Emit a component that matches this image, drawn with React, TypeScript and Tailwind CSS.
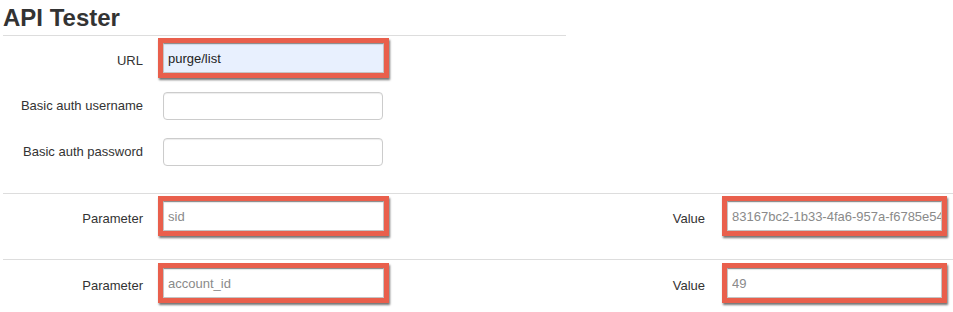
import React from "react";

function Label({ children, className = "" }: { children: React.ReactNode; className?: string }) {
  return (
    <div className={"text-right text-[13px] leading-[16px] text-[#333] " + className}>{children}</div>
  );
}

function RedInput({
  placeholder,
  value,
  widthClass,
  marginClass,
  blue,
}: {
  placeholder?: string;
  value?: string;
  widthClass: string;
  marginClass: string;
  blue?: boolean;
}) {
  return (
    <div
      className={
        "h-[40px] shrink-0 border-[5px] border-[#e95f4c] bg-white shadow-[1px_2px_2px_rgba(0,0,0,0.55)] " +
        widthClass +
        " " +
        marginClass
      }
    >
      <input
        readOnly
        defaultValue={value}
        placeholder={placeholder}
        className={
          "block h-full w-full border border-[#c4c4c4] border-t-[#8f8f8f] pl-[4px] pr-0 text-[13px] text-[#222] outline-none placeholder:text-[#8a8a8a] shadow-[inset_0_1px_1px_rgba(0,0,0,0.1)] font-['Liberation_Sans',Arial,sans-serif] " +
          (blue ? "bg-[#e8f0fe]" : "bg-white")
        }
      />
    </div>
  );
}

function PlainInput() {
  return (
    <input
      readOnly
      className="ml-[20px] block h-[28px] w-[220px] shrink-0 rounded-[4px] border border-[#cccccc] bg-white shadow-[inset_0_1px_1px_rgba(0,0,0,0.075)] outline-none"
    />
  );
}

export default function App() {
  return (
    <div className="w-[953px] h-[312px] overflow-hidden bg-white font-['Liberation_Sans',Arial,sans-serif] text-[#333]">
      <div className="ml-[3px] w-[563px] border-b border-[#dddddd]">
        <h1 className="h-[35px] text-[24px] font-bold leading-[35px] text-[#333]">API Tester</h1>
      </div>

      <div className="mt-[2px] flex items-center">
        <Label className="w-[143px] pt-[5px]">URL</Label>
        <RedInput value="purge/list" widthClass="w-[231px]" marginClass="ml-[15px]" blue />
      </div>

      <div className="mt-[14px] flex items-center">
        <Label className="w-[143px]">Basic auth username</Label>
        <PlainInput />
      </div>

      <div className="mt-[18px] flex items-center">
        <Label className="w-[143px]">Basic auth password</Label>
        <PlainInput />
      </div>

      <div className="ml-[3px] mt-[27px] border-t border-[#dddddd]" />

      <div className="mt-[2px] flex items-center">
        <Label className="w-[143px] pt-[5px]">Parameter</Label>
        <RedInput placeholder="sid" widthClass="w-[231px]" marginClass="ml-[15px]" />
        <Label className="w-[316px] pt-[5px]">Value</Label>
        <RedInput
          placeholder="83167bc2-1b33-4fa6-957a-f6785e54a1d0"
          widthClass="w-[225px]"
          marginClass="ml-[17px]"
        />
      </div>

      <div className="ml-[3px] mt-[23px] border-t border-[#dddddd]" />

      <div className="mt-[3px] flex items-center">
        <Label className="w-[143px] pt-[5px]">Parameter</Label>
        <RedInput placeholder="account_id" widthClass="w-[231px]" marginClass="ml-[15px]" />
        <Label className="w-[316px] pt-[5px]">Value</Label>
        <RedInput placeholder="49" widthClass="w-[225px]" marginClass="ml-[17px]" />
      </div>
    </div>
  );
}
